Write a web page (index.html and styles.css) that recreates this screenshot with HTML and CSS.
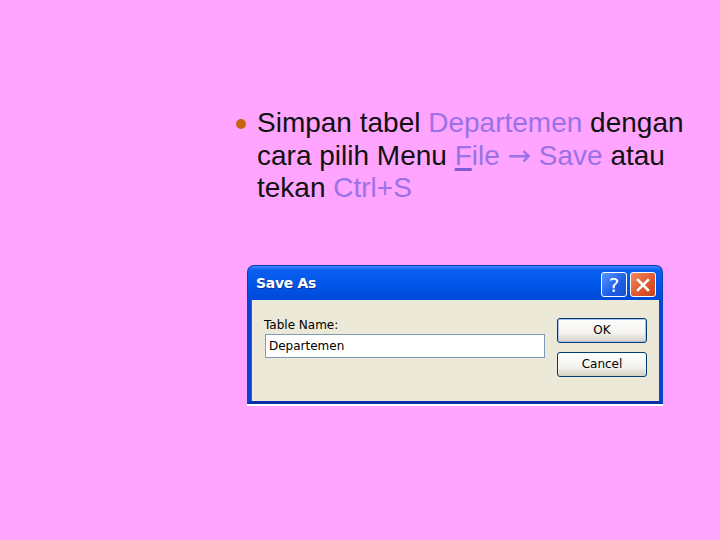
FILE: index.html
```html
<!DOCTYPE html>
<html lang="id">
<head>
    <meta charset="UTF-8">
    <title>Simpan tabel Departemen</title>
    <link rel="stylesheet" href="styles.css">
</head>
<body>
    <div class="slide">
        <ul class="points">
            <li>Simpan tabel <span class="hl">Departemen</span> dengan cara pilih Menu <span class="hl"><span class="key">F</span>ile</span> <span class="hl arrow">&rarr;</span> <span class="hl">Save</span> atau tekan <span class="hl">Ctrl+S</span></li>
        </ul>

        <div class="dialog">
            <div class="dialog-title">
                <span class="title-text">Save As</span>
                <div class="title-buttons">
                    <button class="tb tb-help">?</button>
                    <button class="tb tb-close">
                        <svg width="14" height="14" viewBox="0 0 14 14">
                            <path d="M2 2 L12 12 M12 2 L2 12" stroke="#fff" stroke-width="2.6" stroke-linecap="square"/>
                        </svg>
                    </button>
                </div>
            </div>
            <div class="dialog-body">
                <div class="field">
                    <label for="tableName">Table Name:</label>
                    <input type="text" id="tableName" value="Departemen">
                </div>
                <div class="actions">
                    <button class="btn">OK</button>
                    <button class="btn">Cancel</button>
                </div>
            </div>
        </div>
    </div>
</body>
</html>
```

FILE: styles.css
```css
body {
    margin: 0;
    padding: 0;
    background-color: #ffa4ff;
    font-family: 'Liberation Sans', Arial, sans-serif;
    height: 540px;
    overflow: hidden;
}

.slide {
    display: flex;
    flex-direction: column;
    padding: 107px 0 0 232px;
}

.points {
    list-style: none;
    margin: 0;
    padding: 0;
    width: 465px;
}

.points li {
    position: relative;
    padding-left: 25px;
    font-size: 28px;
    line-height: 32.5px;
    color: #111;
}

.points li::before {
    content: "";
    position: absolute;
    left: 4px;
    top: 12px;
    width: 10px;
    height: 10px;
    border-radius: 50%;
    background: #c8650c;
}

.hl {
    color: #9b72e6;
}

.arrow {
    font-family: 'DejaVu Sans', sans-serif;
    font-size: 28px;
    line-height: 1;
}

.key {
    text-decoration: underline;
    text-decoration-thickness: 3px;
    text-underline-offset: 3px;
    text-decoration-color: #7d5bd0;
}

.dialog {
    margin: 60px 0 0 15px;
    width: 416px;
    border-bottom: 2px solid #fff;
}

.dialog-title {
    height: 34px;
    display: flex;
    align-items: center;
    justify-content: space-between;
    padding: 0 6px 0 8px;
    border-radius: 7px 7px 0 0;
    background: linear-gradient(#3d8cf8 0%, #0a5ff0 12%, #0056e8 55%, #0049d8 100%);
    border: 1px solid #0a3cc0;
    border-bottom: none;
}

.title-text {
    font-family: 'DejaVu Sans', Verdana, sans-serif;
    font-weight: bold;
    font-size: 14px;
    color: #fff;
    letter-spacing: -0.3px;
    text-shadow: 1px 1px 0 #0a2f9a;
}

.title-buttons {
    display: flex;
    gap: 3px;
    margin-top: 4px;
}

.tb {
    width: 26px;
    height: 25px;
    padding: 0;
    border: 1px solid #fff;
    border-radius: 3px;
    display: flex;
    align-items: center;
    justify-content: center;
    cursor: pointer;
}

.tb-help {
    background: linear-gradient(135deg, #5a96ff, #1d5de6 60%, #1a4fd0);
    color: #fff;
    font-family: 'DejaVu Sans', sans-serif;
    font-size: 20px;
}

.tb-close {
    background: linear-gradient(135deg, #f08a60, #e05a30 55%, #c8401a);
}

.dialog-body {
    background: #ece9d8;
    border-left: 4px solid #0844d8;
    border-right: 4px solid #0844d8;
    border-bottom: 3px solid #0a2ea8;
    box-shadow: inset 1px 0 0 #2a5ee6;
    display: flex;
    justify-content: space-between;
    padding: 18px 12px 0 13px;
    box-sizing: border-box;
    height: 104px;
}

.field {
    display: flex;
    flex-direction: column;
    gap: 1px;
}

.field label {
    font-family: 'DejaVu Sans', Tahoma, sans-serif;
    font-size: 12px;
    color: #000;
    line-height: 15px;
}

.field input {
    width: 280px;
    height: 24px;
    box-sizing: border-box;
    border: 1px solid #7f9db9;
    padding: 0 3px;
    font-family: 'DejaVu Sans', Tahoma, sans-serif;
    font-size: 12px;
    color: #000;
    outline: none;
    margin-left: 1px;
}

.actions {
    display: flex;
    flex-direction: column;
    gap: 9px;
}

.btn {
    width: 90px;
    height: 25px;
    border: 1px solid #003c74;
    border-radius: 3px;
    background: linear-gradient(#ffffff, #f4f3ee 60%, #d6d0c5);
    font-family: 'DejaVu Sans', Tahoma, sans-serif;
    font-size: 12px;
    color: #000;
    cursor: pointer;
}

.btn:first-child {
    box-shadow: inset 0 0 0 1px #a8c0ea;
}
```
